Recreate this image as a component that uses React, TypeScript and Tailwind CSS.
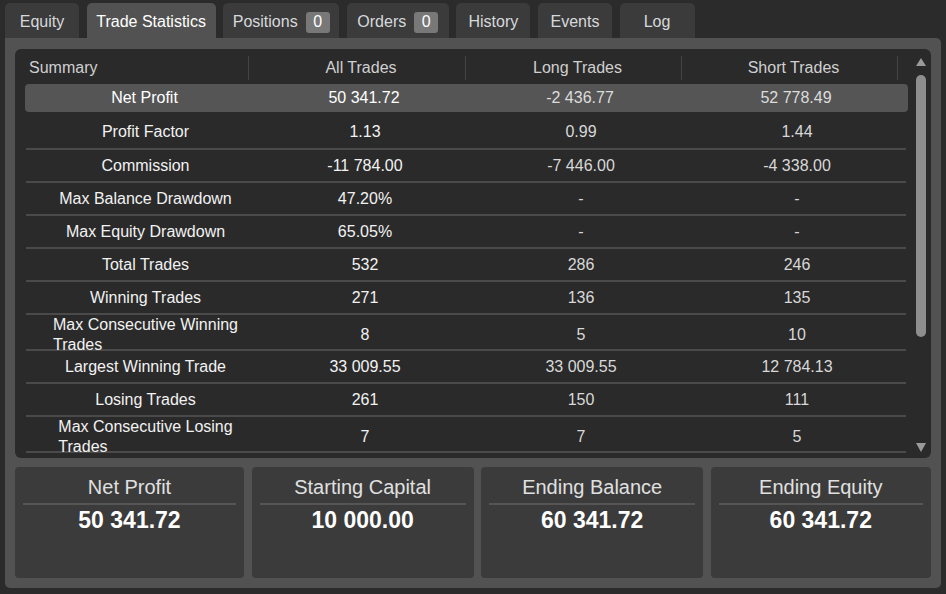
import React from 'react';

type Row = {
  label: string[];
  all: string;
  long: string;
  short: string;
  h: number;
  pt?: number;
};

const tabs = [
  { name: 'Equity', w: 'w-[74px]' },
  { name: 'Trade Statistics', w: 'w-[129px]', active: true },
  { name: 'Positions', w: 'w-[116px]', badge: '0' },
  { name: 'Orders', w: 'w-[102px]', badge: '0' },
  { name: 'History', w: 'w-[74px]' },
  { name: 'Events', w: 'w-[74px]' },
  { name: 'Log', w: 'w-[75px]' },
];

const rows: Row[] = [
  { label: ['Profit Factor'], all: '1.13', long: '0.99', short: '1.44', h: 38, pt: 4 },
  { label: ['Commission'], all: '-11 784.00', long: '-7 446.00', short: '-4 338.00', h: 33 },
  { label: ['Max Balance Drawdown'], all: '47.20%', long: '-', short: '-', h: 33 },
  { label: ['Max Equity Drawdown'], all: '65.05%', long: '-', short: '-', h: 33 },
  { label: ['Total Trades'], all: '532', long: '286', short: '246', h: 33 },
  { label: ['Winning Trades'], all: '271', long: '136', short: '135', h: 33 },
  { label: ['Max Consecutive Winning', 'Trades'], all: '8', long: '5', short: '10', h: 36 },
  { label: ['Largest Winning Trade'], all: '33 009.55', long: '33 009.55', short: '12 784.13', h: 33 },
  { label: ['Losing Trades'], all: '261', long: '150', short: '111', h: 33 },
  { label: ['Max Consecutive Losing', 'Trades'], all: '7', long: '7', short: '5', h: 36 },
];

const cards = [
  { title: 'Net Profit', value: '50 341.72', w: 'w-[229px]' },
  { title: 'Starting Capital', value: '10 000.00', w: 'w-[222px]' },
  { title: 'Ending Balance', value: '60 341.72', w: 'w-[222px]' },
  { title: 'Ending Equity', value: '60 341.72', w: 'w-[220px]' },
];

const cols = 'grid grid-cols-[231px_216px_216px_216px]';

const Label = ({ lines }: { lines: string[] }) => (
  <div className="flex items-center justify-center pl-2">
    <div className="text-left leading-[20px]">
      {lines.map((l, i) => (
        <React.Fragment key={i}>
          {i > 0 && <br />}
          {l}
        </React.Fragment>
      ))}
    </div>
  </div>
);

export default function App() {
  return (
    <div
      className="w-[946px] h-[594px] bg-[#2b2b2b] text-[16px] overflow-hidden"
      style={{ fontFamily: '"Liberation Sans", Arial, sans-serif' }}
    >
      {/* tabs */}
      <div className="flex gap-[7.6px] pl-[5px] pt-[3px] h-[38px]">
        {tabs.map((t) => (
          <div
            key={t.name}
            className={`${t.w} h-[35px] pt-[3px] rounded-t-[5px] flex items-center justify-center gap-2 ${
              t.active ? 'bg-[#525252] text-white' : 'bg-[#3b3b3b] text-[#d6d9dc]'
            }`}
          >
            <span>{t.name}</span>
            {t.badge && (
              <span className="bg-[#787878] text-white rounded-[3px] w-[24px] h-[21px] flex items-center justify-center">
                {t.badge}
              </span>
            )}
          </div>
        ))}
      </div>

      {/* panel */}
      <div className="ml-[5px] w-[936px] h-[550px] bg-[#525252] rounded-b-[5px] rounded-tr-[5px] px-[10px] pt-[11px]">
        <div className="h-[409px] bg-[#2a2a2a] rounded-[6px] flex overflow-hidden">
          <div className="w-[898px] pl-[10px]">
            {/* header */}
            <div className="grid grid-cols-[224px_217px_216px_216px] h-[35px] pt-[2px] items-center text-[#d0d0d0]">
              <div className="pl-1 border-r border-[#444] h-[24px] flex items-center">Summary</div>
              <div className="border-r border-[#444] h-[24px] flex items-center justify-center pl-2">All Trades</div>
              <div className="border-r border-[#444] h-[24px] flex items-center justify-center pl-2">Long Trades</div>
              <div className="border-r border-[#444] h-[24px] flex items-center justify-center pl-2">Short Trades</div>
            </div>

            {/* highlighted row */}
            <div className={`${cols} h-[28px] items-center bg-[#555555] rounded-[4px] text-white w-[883px]`}>
              <Label lines={['Net Profit']} />
              <div className="text-center">50 341.72</div>
              <div className="text-center text-[#dcdcdc]">-2 436.77</div>
              <div className="text-center text-[#dcdcdc]">52 778.49</div>
            </div>

            {rows.map((r, i) => (
              <div
                key={i}
                className={`${cols} items-center border-b-2 border-[#4a4a4a] text-[#f2f2f2] w-[880px] ml-px`}
                style={{ height: r.h, paddingTop: r.pt ?? 0 }}
              >
                <Label lines={r.label} />
                <div className="text-center">{r.all}</div>
                <div className="text-center text-[#d8d8d8]">{r.long}</div>
                <div className="text-center text-[#d8d8d8]">{r.short}</div>
              </div>
            ))}
          </div>

          {/* scrollbar */}
          <div className="w-[20px] flex flex-col items-center pt-[9px] pb-[6px]">
            <svg width="10" height="8" viewBox="0 0 10 8">
              <polygon points="5,0 10,8 0,8" fill="#9a9a9a" />
            </svg>
            <div className="w-[10px] h-[262px] mt-[9px] rounded-full bg-[#8e8e8e]" />
            <div className="flex-1" />
            <svg width="10" height="9" viewBox="0 0 10 9">
              <polygon points="0,0 10,0 5,9" fill="#9a9a9a" />
            </svg>
          </div>
        </div>

        {/* cards */}
        <div className="flex gap-[7.6px] mt-[9px]">
          {cards.map((c) => (
            <div key={c.title} className={`${c.w} h-[111px] bg-[#3b3b3b] rounded-[4px] px-[8px] pt-[8px]`}>
              <div className="text-[20px] text-[#e0e0e0] text-center leading-[24px] pb-[4px] border-b-2 border-[#555]">
                {c.title}
              </div>
              <div className="text-[23px] font-bold text-white text-center leading-[30px]">{c.value}</div>
            </div>
          ))}
        </div>
      </div>
    </div>
  );
}
